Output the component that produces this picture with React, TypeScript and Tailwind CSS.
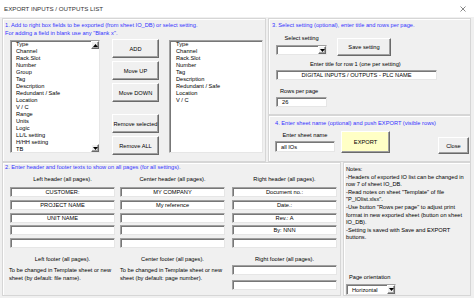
import React from "react";

const sunken =
  "bg-white border border-t-[#a0a0a0] border-l-[#a0a0a0] border-b-[#e6e6e6] border-r-[#e6e6e6] shadow-[inset_1px_1px_0_#777777]";
const raised =
  "bg-[#f0f0f0] border border-t-white border-l-white border-b-[#6a6a6a] border-r-[#6a6a6a] shadow-[inset_-1px_-1px_0_#a0a0a0]";
const frame = "border border-[#d6d6d6] shadow-[inset_1px_1px_0_#ffffff]";
const blue = "text-[#3434ff]";

function Tri({ down }: { down?: boolean }) {
  return (
    <svg width="5" height="3" viewBox="0 0 5 3">
      <path d={down ? "M0 0H5L2.5 3Z" : "M0 3H5L2.5 0Z"} fill="#000" />
    </svg>
  );
}

const leftItems = [
  "Type",
  "Channel",
  "Rack.Slot",
  "Number",
  "Group",
  "Tag",
  "Description",
  "Redundant / Safe",
  "Location",
  "V / C",
  "Range",
  "Units",
  "Logic",
  "LL/L setting",
  "H/HH setting",
  "TB",
];
const rightItems = [
  "Type",
  "Channel",
  "Rack.Slot",
  "Number",
  "Tag",
  "Description",
  "Redundant / Safe",
  "Location",
  "V / C",
];

function HeaderColumn({
  label,
  values,
}: {
  label: string;
  values: string[];
}) {
  return (
    <div className="w-[105px] flex flex-col">
      <div className="mt-[4px] text-center">{label}</div>
      <div className={`${sunken} mt-[4px] h-[10px] flex items-center justify-center`}>{values[0]}</div>
      <div className={`${sunken} mt-[3px] h-[10px] flex items-center justify-center`}>{values[1]}</div>
      <div className={`${sunken} mt-[3px] h-[10px] flex items-center justify-center`}>{values[2]}</div>
      <div className={`${sunken} mt-[2px] h-[10px] flex items-center justify-center`}>{values[3]}</div>
      <div className={`${sunken} mt-[3px] h-[10px] flex items-center justify-center`}>{values[4]}</div>
    </div>
  );
}

export default function App() {
  return (
    <div className="w-[474px] h-[298px] bg-[#f0f0f0] flex flex-col font-['Liberation_Sans',Arial,sans-serif] text-[5.7px] leading-[8px] text-black overflow-hidden">
      {/* Title bar */}
      <div className="h-[17px] bg-white flex items-center justify-between pl-[4px] pr-[8px] shrink-0">
        <span className="text-[6.2px] text-[#333333]">EXPORT INPUTS / OUTPUTS LIST</span>
        <svg width="6" height="6" viewBox="0 0 6 6">
          <path d="M0.5 0.5L5.5 5.5M5.5 0.5L0.5 5.5" stroke="#555555" strokeWidth="0.7" />
        </svg>
      </div>

      <div className="pl-[2px] pt-[1px] flex flex-col">
        {/* Upper row */}
        <div className="flex h-[144px]">
          {/* Frame 1 */}
          <div className={`${frame} w-[264px] h-[144px] flex flex-col`}>
            <div className={`${blue} pl-[2px] pt-[2px]`}>
              <div>1. Add to right box fields to be exported (from sheet IO_DB) or select setting.</div>
              <div>For adding a field in blank use any "Blank x".</div>
            </div>
            <div className="flex items-start pl-[7px] mt-[3px]">
              <div className={`${sunken} w-[90px] h-[113px] flex overflow-hidden`}>
                <div className="flex-1 pl-[5px] leading-[7px]">
                  {leftItems.map((t) => (
                    <div key={t}>{t}</div>
                  ))}
                </div>
                <div className="w-[8px] flex flex-col justify-between">
                  <div className={`${raised} h-[8px] flex items-center justify-center`}>
                    <Tri />
                  </div>
                  <div className={`${raised} h-[8px] flex items-center justify-center`}>
                    <Tri down />
                  </div>
                </div>
              </div>
              <div className="ml-[12px] mt-[-1px] w-[47px] flex flex-col">
                <div className={`${raised} h-[19px] flex items-center justify-center`}>ADD</div>
                <div className={`${raised} mt-[3px] h-[19px] flex items-center justify-center`}>Move UP</div>
                <div className={`${raised} mt-[3px] h-[19px] flex items-center justify-center`}>Move DOWN</div>
                <div className={`${raised} mt-[12px] h-[19px] flex items-center justify-center`}>Remove selected</div>
                <div className={`${raised} mt-[3px] h-[19px] flex items-center justify-center`}>Remove ALL</div>
              </div>
              <div className={`${sunken} ml-[10px] w-[94px] h-[113px] pl-[6px] leading-[7px] overflow-hidden`}>
                {rightItems.map((t) => (
                  <div key={t}>{t}</div>
                ))}
              </div>
            </div>
          </div>

          {/* Right column: frames 3 and 4 */}
          <div className="ml-[2px] w-[203px] flex flex-col">
            <div className={`${frame} h-[97px] flex flex-col`}>
              <div className={`${blue} pl-[3px] pt-[2px]`}>
                3. Select setting (optional), enter title and rows per page.
              </div>
              <div className="flex items-start pl-[7px] mt-[5px]">
                <div className="w-[51px] flex flex-col">
                  <div className="text-center">Select setting</div>
                  <div className={`${sunken} mt-[3px] h-[10px] flex justify-end`}>
                    <div className={`${raised} w-[8px] flex items-center justify-center`}>
                      <Tri down />
                    </div>
                  </div>
                </div>
                <div className={`${raised} ml-[10px] mt-[4px] w-[54px] h-[18px] flex items-center justify-center`}>
                  Save setting
                </div>
              </div>
              <div className="mt-[4px] pl-[41px]">Enter title for row 1 (one per setting)</div>
              <div className={`${sunken} mt-[2px] ml-[7px] w-[161px] h-[10px] flex items-center justify-center`}>
                DIGITAL INPUTS / OUTPUTS - PLC NAME
              </div>
              <div className="mt-[7px] pl-[11px]">Rows per page</div>
              <div className={`${sunken} mt-[2px] ml-[7px] w-[51px] h-[10px] flex items-center pl-[5px]`}>26</div>
            </div>

            <div className={`${frame} h-[47px] flex flex-col`}>
              <div className={`${blue} pl-[6px] pt-[3px]`}>
                4. Enter sheet name (optional) and push EXPORT (visible rows)
              </div>
              <div className="flex items-start pl-[6px] mt-[4px]">
                <div className="w-[60px] flex flex-col">
                  <div className="text-center">Enter sheet name</div>
                  <div className={`${sunken} mt-[2px] h-[11px] flex items-center pl-[5px]`}>all IOs</div>
                </div>
                <div className={`${raised} ml-[6px] w-[49px] h-[22px] bg-[#ffffc6] flex items-center justify-center`}>
                  EXPORT
                </div>
                <div className={`${raised} ml-[48px] mt-[6px] w-[31px] h-[17px] flex items-center justify-center`}>
                  Close
                </div>
              </div>
            </div>
          </div>
        </div>

        {/* Lower row */}
        <div className="flex h-[134px]">
          {/* Frame 2 */}
          <div className={`${frame} w-[339px] h-[134px] flex flex-col`}>
            <div className={`${blue} pl-[2px]`}>
              2. Enter header and footer texts to show on all pages (for all settings).
            </div>
            <div className="flex pl-[7px]">
              <div className="w-[105px] flex flex-col">
                <HeaderColumn
                  label="Left header (all pages)."
                  values={["CUSTOMER:", "PROJECT NAME", "UNIT NAME", "", ""]}
                />
                <div className="mt-[7px] text-center">Left footer (all pages).</div>
                <div className="mt-[3px] ml-[-1px]">
                  <div>To be changed in Template sheet or new</div>
                  <div>sheet (by default: file name).</div>
                </div>
              </div>
              <div className="ml-[5px] w-[105px] flex flex-col">
                <HeaderColumn
                  label="Center header (all pages)."
                  values={["MY COMPANY", "My reference", "", "", ""]}
                />
                <div className="mt-[7px] text-center">Center footer (all pages).</div>
                <div className="mt-[3px]">
                  <div>To be changed in Template sheet or new</div>
                  <div>sheet (by default: page number).</div>
                </div>
              </div>
              <div className="ml-[7px] w-[105px] flex flex-col">
                <HeaderColumn
                  label="Right header (all pages)."
                  values={["Document no.:", "Date.:", "Rev.: A", "By: NNN", ""]}
                />
                <div className="mt-[7px] text-center">Right footer (all pages).</div>
                <div className={`${sunken} mt-[2px] h-[10px]`} />
                <div className={`${sunken} mt-[5px] h-[10px]`} />
              </div>
            </div>
          </div>

          {/* Notes */}
          <div className={`${frame} ml-[2px] w-[128px] h-[134px] flex flex-col`}>
            <div className="pl-[2px] pt-[3px] leading-[7.6px]">
              <div>Notes:</div>
              <div>-Headers of exported IO list can be changed in</div>
              <div>row 7 of sheet IO_DB.</div>
              <div>-Read notes on sheet "Template" of file</div>
              <div>"P_IOlist.xlsx".</div>
              <div>-Use button "Rows per page" to adjust print</div>
              <div>format in new exported sheet (button on sheet</div>
              <div>IO_DB).</div>
              <div>-Setting is saved with Save and EXPORT</div>
              <div>buttons.</div>
            </div>
            <div className="mt-auto pl-[5px]">Page orientation</div>
            <div className={`${sunken} mt-[3px] ml-[2px] w-[50px] h-[11px] flex items-center justify-between pl-[5px]`}>
              <span>Horizontal</span>
              <div className={`${raised} w-[8px] h-full flex items-center justify-center`}>
                <Tri down />
              </div>
            </div>
          </div>
        </div>
      </div>
    </div>
  );
}
